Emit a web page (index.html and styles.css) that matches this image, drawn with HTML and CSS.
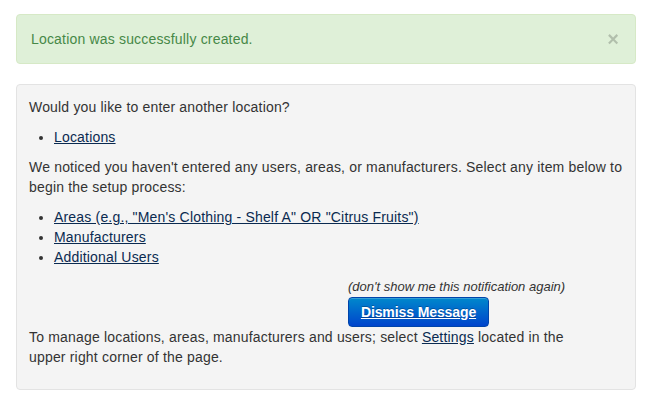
FILE: index.html
```html
<!DOCTYPE html>
<html>
<head>
<meta charset="utf-8">
<link rel="stylesheet" href="styles.css">
</head>
<body>
<div class="page">
  <div class="alert">
    <span class="alert-text">Location was successfully created.</span>
    <button class="close" type="button">×</button>
  </div>
  <div class="well">
    <p>Would you like to enter another location?</p>
    <ul>
      <li><a href="#">Locations</a></li>
    </ul>
    <p>We noticed you haven't entered any users, areas, or manufacturers. Select any item below to begin the setup process:</p>
    <ul>
      <li><a href="#">Areas (e.g., "Men's Clothing - Shelf A" OR "Citrus Fruits")</a></li>
      <li><a href="#">Manufacturers</a></li>
      <li><a href="#">Additional Users</a></li>
    </ul>
    <div class="dismiss">
      <div class="dismiss-note">(don't show me this notification again)</div>
      <a class="btn-primary" href="#">Dismiss Message</a>
    </div>
    <p class="manage">To manage locations, areas, manufacturers and users; select <a href="#">Settings</a> located in the upper right corner of the page.</p>
  </div>
</div>
</body>
</html>
```
FILE: styles.css
```css
html, body {
  margin: 0;
  padding: 0;
  background: #ffffff;
}
body {
  font-family: "Liberation Sans", Arial, Helvetica, sans-serif;
  font-size: 14px;
  line-height: 20px;
  letter-spacing: 0.18px;
  color: #333333;
}
.page {
  padding: 14px 0 0 16px;
  width: 620px;
}
.alert {
  display: flex;
  align-items: center;
  justify-content: space-between;
  background: #dff0d8;
  border: 1px solid #d6e9c6;
  border-radius: 4px;
  padding: 14px;
  color: #468847;
  margin-bottom: 20px;
}
.alert-text {
  line-height: 20px;
}
.close {
  border: 0;
  background: transparent;
  padding: 0;
  margin: 0 2px 0 0;
  font-family: "Liberation Sans", Arial, sans-serif;
  font-size: 20px;
  font-weight: bold;
  line-height: 20px;
  color: #000000;
  opacity: 0.2;
  cursor: pointer;
}
.well {
  background: #f4f4f4;
  border: 1px solid #e3e3e3;
  border-radius: 4px;
  padding: 12px 12px 12px 12px;
}
.well p {
  margin: 0 0 10px 0;
}
.well ul {
  margin: 0 0 10px 25px;
  padding: 0;
}
.well li {
  line-height: 20px;
}
a {
  color: #0a2a50;
  text-decoration: underline;
}
.dismiss {
  margin-left: 319px;
}
.dismiss-note {
  font-style: italic;
  font-size: 13px;
  line-height: 20px;
  letter-spacing: 0;
  color: #333333;
}
.btn-primary {
  display: inline-block;
  box-sizing: border-box;
  width: 141px;
  height: 30px;
  padding: 4px 0 0 0;
  text-align: center;
  color: #ffffff;
  font-weight: bold;
  font-size: 14px;
  line-height: 20px;
  letter-spacing: -0.1px;
  text-shadow: 0 -1px 0 rgba(0, 0, 0, 0.25);
  background: linear-gradient(to bottom, #0088cc, #0044cc);
  border: 1px solid #0044aa;
  border-radius: 4px;
  box-shadow: inset 0 1px 0 rgba(255, 255, 255, 0.2);
  vertical-align: top;
}
.manage {
  width: 545px;
}
```
